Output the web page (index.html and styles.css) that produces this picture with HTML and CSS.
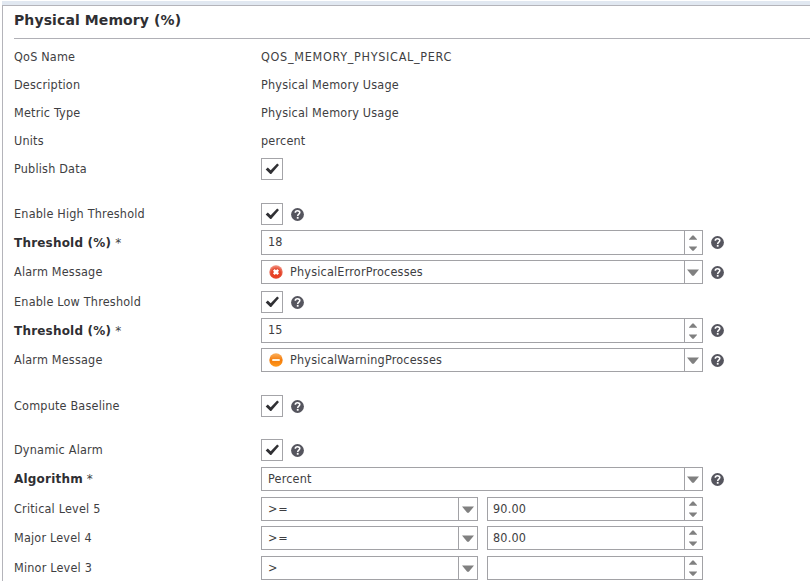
FILE: index.html
```html
<!DOCTYPE html>
<html>
<head>
    <meta charset="utf-8">
    <title>Physical Memory (%)</title>
    <link rel="stylesheet" href="styles.css">
</head>
<body>
    <!-- shared icons -->
    <svg class="icon-defs">
        <defs>
            <radialGradient id="redFill" cx="50%" cy="65%" r="60%">
                <stop offset="0" stop-color="#ee3a18"/>
                <stop offset="0.6" stop-color="#e4452c"/>
                <stop offset="1" stop-color="#f08a78"/>
            </radialGradient>
            <linearGradient id="orangeFill" x1="0" y1="0" x2="0" y2="1">
                <stop offset="0" stop-color="#fbb05c"/>
                <stop offset="0.5" stop-color="#f47c0c"/>
                <stop offset="1" stop-color="#ff9a1c"/>
            </linearGradient>
        </defs>
        <symbol id="check" viewBox="0 0 20 20">
            <path d="M3.7 10.4 L5.8 8.4 L8.7 11.3 L15.2 4.5 L17 6 L9.2 15 L8.3 15 Z" fill="#303034"/>
        </symbol>
        <symbol id="help" viewBox="0 0 13 13">
            <circle cx="6.5" cy="6.5" r="6.4" fill="#55555e"/>
            <path d="M4.3 4.8 C4.3 2.2 8.8 2.2 8.8 4.6 C8.8 6.1 6.7 6.1 6.7 7.9" fill="none" stroke="#fff" stroke-width="1.6"/>
            <rect x="5.8" y="8.9" width="1.8" height="1.8" fill="#fff"/>
        </symbol>
        <symbol id="arrow" viewBox="0 0 12 7">
            <path d="M0 0.5 H12 L6.8 6.8 H5.2 Z" fill="#808080"/>
        </symbol>
        <symbol id="spin" viewBox="0 0 8 16">
            <path d="M0 4.8 V4.2 L3.4 0.4 H4.6 L8 4.2 V4.8 Z M0 11.4 H8 V12 L4.6 15.8 H3.4 L0 12 Z" fill="#808080"/>
        </symbol>
        <symbol id="error" viewBox="0 0 14 14">
            <circle cx="7" cy="7" r="6.7" fill="url(#redFill)"/>
            <path d="M4.8 4.8 L9.2 9.2 M9.2 4.8 L4.8 9.2" stroke="#fff" stroke-width="2.5"/>
        </symbol>
        <symbol id="warning" viewBox="0 0 14 14">
            <circle cx="7" cy="7" r="6.7" fill="url(#orangeFill)"/>
            <rect x="3.2" y="6" width="7.6" height="2" rx="0.6" fill="#fff3dc"/>
        </symbol>
    </svg>

    <div class="panel">
        <h2>Physical Memory (%)</h2>
        <div class="form">
            <div class="row"><label>QoS Name</label><span class="value qos">QOS_MEMORY_PHYSICAL_PERC</span></div>
            <div class="row"><label>Description</label><span class="value">Physical Memory Usage</span></div>
            <div class="row"><label>Metric Type</label><span class="value">Physical Memory Usage</span></div>
            <div class="row"><label>Units</label><span class="value">percent</span></div>
            <div class="row"><label>Publish Data</label><span class="checkbox"><svg><use href="#check"/></svg></span></div>

            <div class="row group"><label>Enable High Threshold</label><span class="checkbox"><svg><use href="#check"/></svg></span><svg class="help"><use href="#help"/></svg></div>
            <div class="row row-29"><label class="required"><b>Threshold (%)</b> *</label><div class="field tall"><span class="text">18</span><span class="trigger"><svg class="spin"><use href="#spin"/></svg></span></div><svg class="help"><use href="#help"/></svg></div>
            <div class="row row-30"><label>Alarm Message</label><div class="field"><svg class="severity"><use href="#error"/></svg><span class="text message">PhysicalErrorProcesses</span><span class="trigger"><svg class="arrow"><use href="#arrow"/></svg></span></div><svg class="help"><use href="#help"/></svg></div>
            <div class="row row-30"><label>Enable Low Threshold</label><span class="checkbox"><svg><use href="#check"/></svg></span><svg class="help"><use href="#help"/></svg></div>
            <div class="row row-27"><label class="required"><b>Threshold (%)</b> *</label><div class="field tall"><span class="text">15</span><span class="trigger"><svg class="spin"><use href="#spin"/></svg></span></div><svg class="help"><use href="#help"/></svg></div>
            <div class="row row-32"><label>Alarm Message</label><div class="field"><svg class="severity"><use href="#warning"/></svg><span class="text message">PhysicalWarningProcesses</span><span class="trigger"><svg class="arrow"><use href="#arrow"/></svg></span></div><svg class="help"><use href="#help"/></svg></div>

            <div class="row group"><label>Compute Baseline</label><span class="checkbox"><svg><use href="#check"/></svg></span><svg class="help"><use href="#help"/></svg></div>

            <div class="row group"><label>Dynamic Alarm</label><span class="checkbox"><svg><use href="#check"/></svg></span><svg class="help"><use href="#help"/></svg></div>
            <div class="row row-30"><label class="required"><b>Algorithm</b> *</label><div class="field"><span class="text">Percent</span><span class="trigger"><svg class="arrow"><use href="#arrow"/></svg></span></div><svg class="help"><use href="#help"/></svg></div>
            <div class="row row-30"><label>Critical Level 5</label><div class="field operator"><span class="text sign">&gt;=</span><span class="trigger"><svg class="arrow"><use href="#arrow"/></svg></span></div><div class="field level"><span class="text">90.00</span><span class="trigger"><svg class="spin"><use href="#spin"/></svg></span></div></div>
            <div class="row"><label>Major Level 4</label><div class="field operator"><span class="text sign">&gt;=</span><span class="trigger"><svg class="arrow"><use href="#arrow"/></svg></span></div><div class="field level"><span class="text">80.00</span><span class="trigger"><svg class="spin"><use href="#spin"/></svg></span></div></div>
            <div class="row row-32"><label>Minor Level 3</label><div class="field operator"><span class="text sign">&gt;</span><span class="trigger"><svg class="arrow"><use href="#arrow"/></svg></span></div><div class="field level"><span class="text"></span><span class="trigger"><svg class="spin"><use href="#spin"/></svg></span></div></div>
        </div>
    </div>
</body>
</html>
```
FILE: styles.css
```css
* { box-sizing: border-box; }
html { overflow: hidden; }
body { font-family: "DejaVu Sans Condensed", "DejaVu Sans", sans-serif; font-stretch: condensed; font-size: 12.5px; line-height: 16px; letter-spacing: 0.2px; color: #3e3e42; background-color: #fff; margin: 0; padding-top: 1px; height: 583px; overflow: hidden; }
svg { display: block; flex: none; }
.icon-defs { position: absolute; width: 0; height: 0; }

.panel { border-top: 4px solid #e1e8f1; margin-left: 2px; margin-right: 1px; height: 580px; box-shadow: inset 1px 1px 0 #b4b4ba; padding-left: 12px; }
h2 { margin: 0; height: 34px; padding-top: 5px; line-height: 20px; font-family: "DejaVu Sans", sans-serif; font-stretch: normal; font-size: 14px; letter-spacing: 0.1px; color: #2f2f33; border-bottom: 1px solid #b0b0b6; }
.form { padding-top: 4px; }

.row { display: flex; align-items: center; height: 28px; }
.row-27 { height: 27px; }
.row-29 { height: 29px; }
.row-30 { height: 30px; }
.row-32 { height: 32px; }
.group { margin-top: 17px; }
.group + .group, .row-32 + .group { margin-top: 16px; }

label { flex: none; width: 247px; }
.required { font-family: "DejaVu Sans", sans-serif; font-stretch: normal; font-size: 12px; }
.required b { color: #2f2f33; }
.qos { letter-spacing: 0.7px; }
.checkbox { width: 22px; height: 22px; border: 1px solid #a4a4a8; }
.checkbox svg { width: 20px; height: 20px; }
.help { width: 13px; height: 13px; margin-left: 8px; }

.field { display: flex; align-items: center; width: 442px; height: 24px; border: 1px solid #a2a2a6; }
.tall { height: 25px; }
.operator { width: 217px; }
.level { width: 216px; margin-left: 9px; }
.text { flex: 1; padding-left: 6px; }
.tall .text { padding-bottom: 2px; }
.level .text { padding-left: 5px; }
.field .message { padding-left: 7px; }
.sign { letter-spacing: 0.8px; }
.severity { width: 14px; height: 14px; margin-left: 7px; }
.trigger { display: flex; align-items: center; justify-content: center; width: 18px; height: 100%; padding-right: 1px; border-left: 1px solid #a2a2a6; }
.operator .trigger { width: 19px; }
.arrow { width: 12px; height: 7px; }
.spin { width: 8px; height: 16px; }
```
